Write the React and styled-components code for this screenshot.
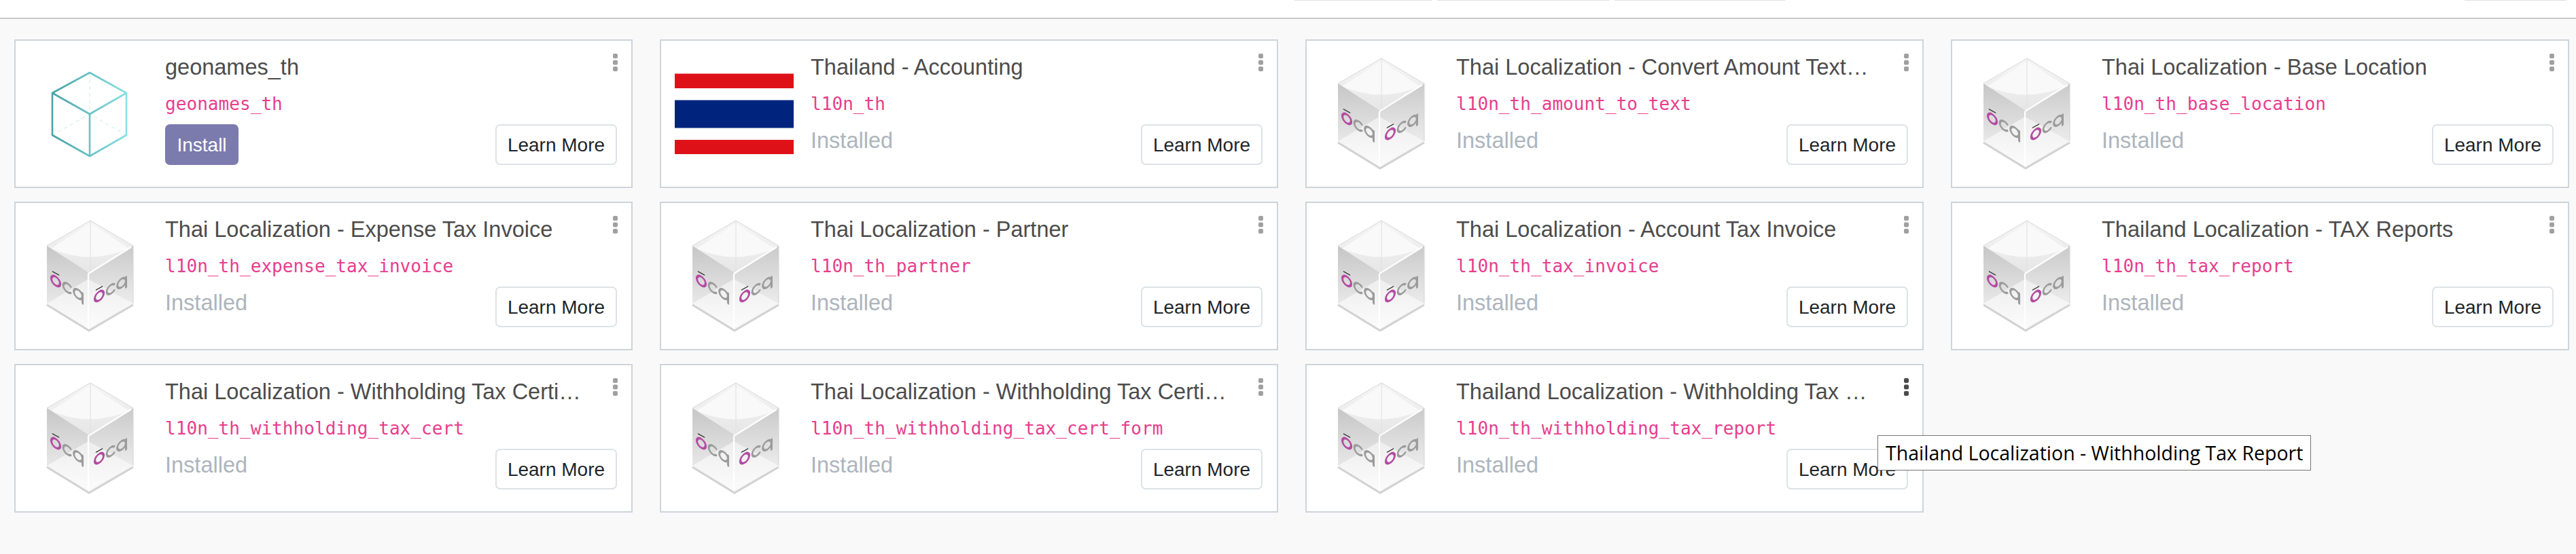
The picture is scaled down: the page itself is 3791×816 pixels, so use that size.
import React from "react";
import styled, { createGlobalStyle } from "styled-components";

const Global = createGlobalStyle`
  html, body { margin: 0; padding: 0; background: #f9f9f9; }
  body { font-family: "Liberation Sans", Arial, sans-serif; min-height: 816px; overflow: hidden; }
`;

const Page = styled.div`
  width: 3791px;
  height: 816px;
  background: #f9f9f9;
  overflow: hidden;
`;

const Header = styled.header`
  height: 26px;
  background: #fff;
  border-bottom: 2px solid #c8c8c8;
  display: flex;
  justify-content: space-between;
  align-items: flex-start;
  padding: 0 14px 0 1905px;
`;

const EdgeGroup = styled.div`
  display: flex;
  gap: 8px;
`;

const ButtonEdge = styled.div`
  width: ${(p) => p.$w}px;
  height: 1px;
  background: #dee2e6;
`;

const Grid = styled.main`
  display: grid;
  grid-template-columns: repeat(4, 910px);
  gap: 20px 40px;
  padding: 30px 0 0 21px;
`;

const Card = styled.article`
  position: relative;
  box-sizing: border-box;
  height: 219px;
  background: #fff;
  border: 2px solid #ced4da;
  padding: 20px;
  display: flex;
  gap: 25px;
`;

const Thumb = styled.svg`
  flex: 0 0 175px;
  width: 175px;
  height: 175px;
  display: block;
`;

const Body = styled.div`
  flex: 1;
  min-width: 0;
  display: flex;
  flex-direction: column;
`;

const TitleRow = styled.div`
  display: flex;
  justify-content: space-between;
  align-items: flex-start;
`;

const Title = styled.h4`
  margin: 0;
  width: 612px;
  font-size: 32.5px;
  font-weight: 400;
  line-height: 38px;
  color: #4c4c4c;
  white-space: nowrap;
  overflow: hidden;
  text-overflow: ellipsis;
`;

const Kebab = styled.svg`
  width: 7px;
  height: 26px;
  margin-top: -1px;
  fill: ${(p) => (p.$active ? "#4a4a4a" : "#a0a0a0")};
`;

const TechName = styled.code`
  margin-top: 17px;
  font-family: "DejaVu Sans Mono", "Liberation Mono", monospace;
  font-size: 26.1px;
  line-height: 36px;
  color: #e83e8c;
  white-space: nowrap;
`;

const Footer = styled.div`
  margin-top: 12px;
  display: flex;
  justify-content: space-between;
  align-items: flex-start;
  padding-right: 1px;
`;

const Installed = styled.span`
  margin-top: 5px;
  font-size: 32.5px;
  line-height: 38px;
  color: #adb5bd;
`;

const Button = styled.button`
  box-sizing: border-box;
  height: 60px;
  padding: 1px 0 0;
  font-family: "Liberation Sans", Arial, sans-serif;
  font-size: 28px;
  border-radius: 7px;
`;

const InstallButton = styled(Button)`
  width: 108px;
  background: #7c7bad;
  border: 2px solid #7c7bad;
  color: #fff;
`;

const LearnButton = styled(Button)`
  width: 179px;
  background: #fff;
  border: 2px solid #dee2e6;
  color: #212529;
`;

const Tooltip = styled.div`
  position: absolute;
  left: 840px;
  top: 103px;
  box-sizing: border-box;
  width: 638px;
  height: 52px;
  padding: 0 11px;
  background: #fff;
  border: 1px solid #767676;
  color: #000;
  font-family: "Open Sans", "Noto Sans", sans-serif;
  font-size: 28.5px;
  line-height: 50px;
  white-space: nowrap;
  z-index: 2;
`;

const GenericCube = () => (
  <Thumb viewBox="0 0 175 175">
    <defs>
      <linearGradient id="teal" gradientUnits="userSpaceOnUse" x1="34" y1="90" x2="143" y2="90">
        <stop offset="0" stopColor="#4aa2a6" />
        <stop offset="1" stopColor="#8ae0e3" />
      </linearGradient>
    </defs>
    <g fill="none" stroke="#d8f1f1" strokeWidth="1.4" strokeDasharray="5 5">
      <path d="M89 27V88M34 119L89 88M143 119L89 88" />
    </g>
    <g fill="none" stroke="url(#teal)" strokeWidth="2.6" strokeLinejoin="round">
      <path d="M89 27L143 57V119L89 150L34 119V57Z" />
      <path d="M34 57L89 88L143 57M89 88V150" />
    </g>
  </Thumb>
);

const FlagIcon = () => (
  <Thumb viewBox="0 0 175 175">
    <rect x="0" y="28.5" width="175" height="21.5" fill="#df1118" />
    <rect x="0" y="67.5" width="175" height="41" fill="#00247d" />
    <rect x="0" y="126" width="175" height="21" fill="#df1118" />
  </Thumb>
);

const OcaLetters = ({ matrix }) => (
  <g transform={`matrix(${matrix})`} fill="none" strokeLinecap="round">
    <ellipse cx="0" cy="0" rx="6.5" ry="6.5" stroke="#b44aa2" strokeWidth="3.2" />
    <path d="M-4.5 -11.5L4.5 -11.5" stroke="#333" strokeWidth="1.5" />
    <path d="M22 -4.5A6.4 6.4 0 1 0 22 4.5" stroke="#9b9b9b" strokeWidth="3" />
    <ellipse cx="33" cy="0" rx="6.4" ry="6.4" stroke="#9b9b9b" strokeWidth="3" />
    <path d="M39.5 -5V10" stroke="#9b9b9b" strokeWidth="3" />
  </g>
);

const OcaCube = () => (
  <Thumb viewBox="0 0 175 175">
    <defs>
      <linearGradient id="ocaTop" x1="0" y1="0" x2="0" y2="1">
        <stop offset="0" stopColor="#f6f6f6" />
        <stop offset="1" stopColor="#e6e6e6" />
      </linearGradient>
      <linearGradient id="ocaLeft" x1="0" y1="0" x2="0" y2="1">
        <stop offset="0" stopColor="#c6c6c6" />
        <stop offset="0.6" stopColor="#e4e4e4" />
        <stop offset="1" stopColor="#f8f8f8" />
      </linearGradient>
      <linearGradient id="ocaRight" x1="0" y1="0" x2="0" y2="1">
        <stop offset="0" stopColor="#cacaca" />
        <stop offset="0.6" stopColor="#e8e8e8" />
        <stop offset="1" stopColor="#f6f6f6" />
      </linearGradient>
      <linearGradient id="ocaFloor" x1="0" y1="0" x2="0" y2="1">
        <stop offset="0" stopColor="#f2f2f2" />
        <stop offset="1" stopColor="#fdfdfd" />
      </linearGradient>
    </defs>
    <path d="M90 6L153 43V128L88 169L26 128V43Z" fill="#fff" />
    <path d="M90 6L153 43L87 82L26 43Z" fill="url(#ocaTop)" />
    <path d="M32 47Q88 72 147 47L90 10Z" fill="#f9f9f9" />
    <path d="M26 43L87 82V169L26 128Z" fill="url(#ocaLeft)" />
    <path d="M87 82L153 43V128L87 169Z" fill="url(#ocaRight)" />
    <path d="M26 128L87 92V165Z" fill="url(#ocaFloor)" opacity="0.8" />
    <path d="M87 92L153 128L87 165Z" fill="url(#ocaFloor)" opacity="0.8" />
    <path d="M90 6V80" stroke="#e2e2e2" strokeWidth="1.2" fill="none" />
    <path d="M87 84L150 45M87 84V166" stroke="#fff" strokeWidth="2.2" fill="none" />
    <path d="M26 43L90 6L153 43" stroke="#e0e0e0" strokeWidth="1.4" fill="none" />
    <path d="M26 130L88 168L153 130" stroke="#d2d2d2" strokeWidth="3" fill="none" strokeLinejoin="round" />
    <path d="M153 43V128" stroke="#d8d8d8" strokeWidth="1.2" fill="none" />
    <OcaLetters matrix="1 .58 0 1 39 95" />
    <OcaLetters matrix="1 -.58 0 1 103 117" />
  </Thumb>
);

const modules = [
  { title: "geonames_th", tech: "geonames_th", icon: "cube", install: true },
  { title: "Thailand - Accounting", tech: "l10n_th", icon: "flag" },
  { title: "Thai Localization - Convert Amount Text to Words", tech: "l10n_th_amount_to_text" },
  { title: "Thai Localization - Base Location", tech: "l10n_th_base_location" },
  { title: "Thai Localization - Expense Tax Invoice", tech: "l10n_th_expense_tax_invoice" },
  { title: "Thai Localization - Partner", tech: "l10n_th_partner" },
  { title: "Thai Localization - Account Tax Invoice", tech: "l10n_th_tax_invoice" },
  { title: "Thailand Localization - TAX Reports", tech: "l10n_th_tax_report" },
  { title: "Thai Localization - Withholding Tax Certificate", tech: "l10n_th_withholding_tax_cert" },
  { title: "Thai Localization - Withholding Tax Certificate Form", tech: "l10n_th_withholding_tax_cert_form" },
  { title: "Thailand Localization - Withholding Tax Report", tech: "l10n_th_withholding_tax_report", hovered: true },
];

const icons = { cube: GenericCube, flag: FlagIcon };

const ModuleCard = ({ title, tech, icon, install, hovered }) => {
  const Icon = icons[icon] || OcaCube;
  return (
    <Card>
      <Icon />
      <Body>
        <TitleRow>
          <Title>{title}</Title>
          <Kebab viewBox="0 0 7 26" $active={hovered}>
            <rect x="0" y="0" width="7" height="7" rx="2" />
            <rect x="0" y="9.5" width="7" height="7" rx="2" />
            <rect x="0" y="19" width="7" height="7" rx="2" />
          </Kebab>
        </TitleRow>
        <TechName>{tech}</TechName>
        <Footer>
          {install ? <InstallButton>Install</InstallButton> : <Installed>Installed</Installed>}
          <LearnButton>Learn More</LearnButton>
        </Footer>
      </Body>
      {hovered && <Tooltip>{title}</Tooltip>}
    </Card>
  );
};

export default function App() {
  return (
    <Page>
      <Global />
      <Header>
        <EdgeGroup>
          <ButtonEdge $w={202} />
          <ButtonEdge $w={253} />
          <ButtonEdge $w={251} />
        </EdgeGroup>
        <ButtonEdge $w={150} />
      </Header>
      <Grid>
        {modules.map((m) => (
          <ModuleCard key={m.tech} {...m} />
        ))}
      </Grid>
    </Page>
  );
}
